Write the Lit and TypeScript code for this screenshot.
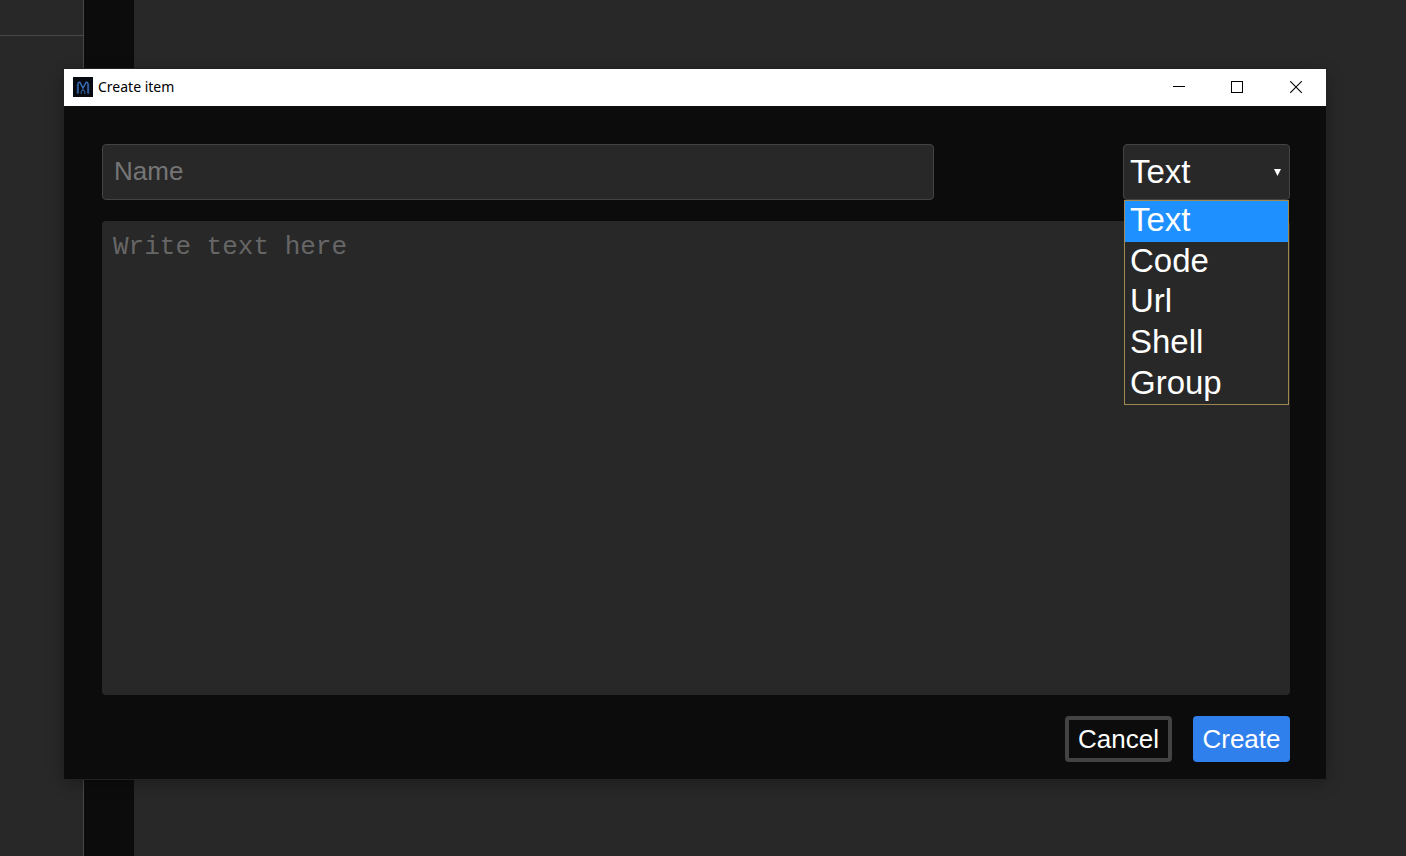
import { LitElement, html, css } from "lit";
import { customElement, state } from "lit/decorators.js";
import { classMap } from "lit/directives/class-map.js";

const TYPES = ["Text", "Code", "Url", "Shell", "Group"];

@customElement("title-bar")
class TitleBar extends LitElement {
  static styles = css`
    :host {
      display: flex;
      align-items: center;
      box-sizing: border-box;
      height: 37px;
      padding: 0 0 1px 9px;
      background: #fff;
      color: #000;
    }
    .logo {
      width: 20px;
      height: 20px;
      flex: none;
    }
    .title {
      flex: 1;
      margin: 0 0 0 5px;
      font: 400 14px/22px "Noto Sans", "Open Sans", sans-serif;
    }
    .control {
      display: flex;
      align-items: center;
      justify-content: center;
      width: 59px;
      height: 36px;
      padding: 0;
      border: 0;
      background: none;
      color: inherit;
    }
    .glyph {
      width: 13px;
      height: 13px;
    }
  `;

  render() {
    return html`
      <svg class="logo" viewBox="0 0 20 20" aria-hidden="true">
        <rect width="20" height="20" fill="#070a10" />
        <g fill="none" stroke="#3b70bd">
          <path d="M5 16.5V7.5Q5 5 6.8 5.2L10 11L13.2 5.2Q15 5 15 7.5V16.5" stroke-width="1.4" />
          <path d="M4.2 7V17M15.8 7V17" stroke-width="1" opacity=".5" />
          <path d="M8.2 17V14.5L10 12.5L11.8 14.5V17" stroke-width="1.1" opacity=".75" />
        </g>
      </svg>
      <h1 class="title">Create item</h1>
      <button class="control" aria-label="Minimize">
        <svg class="glyph" viewBox="0 0 13 13"><path d="M1 5.5H13" stroke="#000" /></svg>
      </button>
      <button class="control" aria-label="Maximize">
        <svg class="glyph" viewBox="0 0 13 13">
          <rect x=".5" y=".5" width="11" height="11" fill="none" stroke="#000" />
        </svg>
      </button>
      <button class="control" aria-label="Close">
        <svg class="glyph" viewBox="0 0 13 13">
          <path d="M.2 .2L11.8 11.8M11.8 .2L.2 11.8" stroke="#000" stroke-width="1.1" />
        </svg>
      </button>
    `;
  }
}

@customElement("type-picker")
class TypePicker extends LitElement {
  @state() private value = "Text";
  @state() private open = true;

  static styles = css`
    :host {
      display: block;
      position: relative;
      font: 33px/40px "Liberation Sans", Arial, sans-serif;
      color: #fff;
    }
    .select {
      appearance: none;
      display: block;
      box-sizing: border-box;
      width: 100%;
      height: 56px;
      padding: 0 24px 0 6px;
      border: 1px solid #434343;
      border-radius: 4px;
      outline: none;
      background: #282828;
      color: inherit;
      font: inherit;
    }
    .arrow {
      position: absolute;
      top: 25px;
      right: 9px;
      width: 7px;
      height: 7px;
      pointer-events: none;
    }
    .menu {
      position: absolute;
      top: 56px;
      left: 1px;
      right: 1px;
      z-index: 1;
      display: grid;
      grid-template-rows: repeat(5, 1fr);
      box-sizing: border-box;
      height: 205px;
      border: 1px solid #a08850;
      background: #282828;
    }
    .option {
      padding: 0 5px 2px;
      border: 0;
      background: none;
      color: inherit;
      font: inherit;
      line-height: 38px;
      text-align: left;
    }
    .selected {
      background: #1e90ff;
    }
  `;

  private choose(type: string) {
    this.value = type;
    this.open = false;
  }

  private toggle(event: Event) {
    event.preventDefault();
    this.open = !this.open;
  }

  render() {
    return html`
      <select class="select" aria-label="Item type" .value=${this.value} @mousedown=${this.toggle}>
        ${TYPES.map((t) => html`<option ?selected=${t === this.value}>${t}</option>`)}
      </select>
      <svg class="arrow" viewBox="0 0 7 7" aria-hidden="true"><path d="M0 0H7L3.5 7Z" fill="#fff" /></svg>
      ${this.open
        ? html`<div class="menu" role="listbox" aria-label="Item type">
            ${TYPES.map(
              (t) => html`<button
                class=${classMap({ option: true, selected: t === this.value })}
                role="option"
                aria-selected=${t === this.value}
                @click=${() => this.choose(t)}
              >${t}</button>`
            )}
          </div>`
        : null}
    `;
  }
}

@customElement("app-root")
class AppRoot extends LitElement {
  static styles = css`
    :host {
      display: grid;
      min-height: 100vh;
      background: #282828;
      font-family: "Liberation Sans", Arial, sans-serif;
    }
    .backdrop,
    .window {
      grid-area: 1 / 1;
    }
    .backdrop {
      display: flex;
    }
    .sidebar {
      box-sizing: border-box;
      width: 84px;
      border-right: 1px solid #484848;
    }
    .sidebar-head {
      height: 35px;
      border-bottom: 1px solid #484848;
    }
    .gutter {
      width: 50px;
      background: #0c0c0c;
    }
    .window {
      display: flex;
      flex-direction: column;
      margin: 69px 80px 77px 64px;
      background: #0c0c0c;
      box-shadow: 0 0 0 1px #222, 0 4px 16px rgba(0, 0, 0, 0.3);
      z-index: 1;
    }
    .form {
      flex: 1;
      display: flex;
      flex-direction: column;
      gap: 21px;
      padding: 38px 36px 17px 38px;
    }
    .row {
      display: flex;
      justify-content: space-between;
    }
    .name {
      box-sizing: border-box;
      width: 70%;
      height: 56px;
      padding: 0 11px 2px;
      border: 1px solid #434343;
      border-radius: 4px;
      outline: none;
      background: #282828;
      color: #fff;
      font: 26px "Liberation Sans", Arial, sans-serif;
    }
    .type {
      width: 167px;
    }
    .content {
      flex: 1;
      box-sizing: border-box;
      width: 100%;
      padding: 11px;
      border: 0;
      border-radius: 4px;
      outline: none;
      resize: none;
      background: #282828;
      color: #fff;
      font: 26px/30px "Liberation Mono", "Courier New", monospace;
    }
    .name::placeholder {
      color: #757575;
    }
    .content::placeholder {
      color: #666;
    }
    .actions {
      display: flex;
      justify-content: flex-end;
      gap: 21px;
    }
    .button {
      min-width: 97px;
      height: 46px;
      padding: 0 9px;
      border: 0;
      border-radius: 4px;
      background: #2f80ed;
      color: #fff;
      font: 26px "Liberation Sans", Arial, sans-serif;
    }
    .outlined {
      border: 4px solid #434343;
      background: none;
    }
  `;

  render() {
    return html`
      <div class="backdrop">
        <div class="sidebar"><div class="sidebar-head"></div></div>
        <div class="gutter"></div>
      </div>
      <main class="window">
        <title-bar></title-bar>
        <form class="form" @submit=${(e: Event) => e.preventDefault()}>
          <div class="row">
            <input class="name" type="text" placeholder="Name" aria-label="Name" />
            <type-picker class="type"></type-picker>
          </div>
          <textarea class="content" placeholder="Write text here" aria-label="Text"></textarea>
          <div class="actions">
            <button class="button outlined" type="button">Cancel</button>
            <button class="button" type="submit">Create</button>
          </div>
        </form>
      </main>
    `;
  }
}
